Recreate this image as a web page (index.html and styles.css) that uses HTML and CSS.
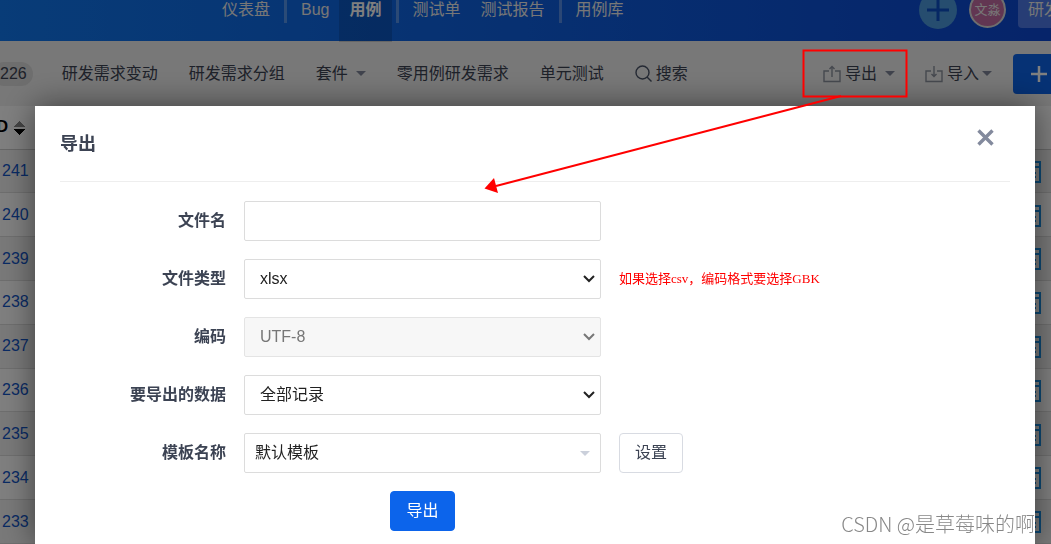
FILE: index.html
```html
<!DOCTYPE html>
<html lang="zh-CN">
<head>
    <meta charset="utf-8">
    <title>用例 - 导出</title>
    <link rel="stylesheet" href="styles.css">
</head>
<body>
    <div class="page">
        <header class="header">
            <nav class="navbar">
                <a href="#">仪表盘</a>
                <span class="divider"></span>
                <a href="#">Bug</a>
                <a href="#" class="active">用例</a>
                <span class="divider"></span>
                <a href="#">测试单</a>
                <a href="#">测试报告</a>
                <span class="divider"></span>
                <a href="#">用例库</a>
            </nav>
            <div class="header-right">
                <button class="add-btn" aria-label="添加">
                    <svg width="22" height="22" viewBox="0 0 22 22"><path d="M11 0v22M0 11h22" stroke="#0c50c8" stroke-width="3"/></svg>
                </button>
                <a href="#" class="avatar">文淼</a>
                <button class="switch-btn">研发</button>
            </div>
        </header>

        <div class="toolbar">
            <span class="label-count">226</span>
            <a href="#">研发需求变动</a>
            <a href="#">研发需求分组</a>
            <a href="#">套件 <span class="caret"></span></a>
            <a href="#">零用例研发需求</a>
            <a href="#">单元测试</a>
            <a href="#" class="search">
                <svg width="17" height="17" viewBox="0 0 17 17" fill="none" stroke="#4b5468" stroke-width="1.4"><circle cx="7.5" cy="7.5" r="6.5"/><path d="M12 12l4.500 4.500"/></svg>
                搜索
            </a>
            <div class="toolbar-right">
                <a href="#" class="export-link">
                    <svg width="18" height="18" viewBox="0 0 18 18" fill="none" stroke="#8c929e" stroke-width="1.400"><path d="M6 6H1v10.500h16V6h-5M9 12V1.500M6.500 4L9 1.500 11.500 4"/></svg>
                    导出 <span class="caret"></span>
                </a>
                <a href="#" class="import-link">
                    <svg width="18" height="18" viewBox="0 0 18 18" fill="none" stroke="#8c929e" stroke-width="1.400"><path d="M6 6H1v10.500h16V6h-5M9 1v10.500M6.500 9L9 11.500 11.500 9"/></svg>
                    导入<span class="caret"></span>
                </a>
                <button class="create-btn" aria-label="建用例">
                    <svg width="16" height="16" viewBox="0 0 16 16"><path d="M8 0v16M0 8h16" stroke="#fff" stroke-width="2.500"/></svg>
                </button>
            </div>
        </div>

        <div class="table-wrap">
            <table class="case-table">
                <thead>
                    <tr><th>ID <span class="sort"></span></th><th></th></tr>
                </thead>
                <tbody>
                    <tr><td><a href="#">241</a></td><td><svg class="icon-case"><use href="#case"/></svg></td></tr>
                    <tr><td><a href="#">240</a></td><td><svg class="icon-case"><use href="#case"/></svg></td></tr>
                    <tr><td><a href="#">239</a></td><td><svg class="icon-case"><use href="#case"/></svg></td></tr>
                    <tr><td><a href="#">238</a></td><td><svg class="icon-case"><use href="#case"/></svg></td></tr>
                    <tr><td><a href="#">237</a></td><td><svg class="icon-case"><use href="#case"/></svg></td></tr>
                    <tr><td><a href="#">236</a></td><td><svg class="icon-case"><use href="#case"/></svg></td></tr>
                    <tr><td><a href="#">235</a></td><td><svg class="icon-case"><use href="#case"/></svg></td></tr>
                    <tr><td><a href="#">234</a></td><td><svg class="icon-case"><use href="#case"/></svg></td></tr>
                    <tr><td><a href="#">233</a></td><td><svg class="icon-case"><use href="#case"/></svg></td></tr>
                </tbody>
            </table>
        </div>
    </div>

    <svg class="symbols">
        <symbol id="case" viewBox="0 0 18 22">
            <path d="M1 1h16v20H1zM1 6h16M5 12h8M5 16h8" fill="none" stroke="#1890e6" stroke-width="2"/>
        </symbol>
    </svg>

    <div class="modal-backdrop">
        <div class="modal" role="dialog" aria-labelledby="modal-title">
            <div class="modal-header">
                <h2 id="modal-title">导出</h2>
                <button class="close" aria-label="关闭">
                    <svg width="17" height="17" viewBox="0 0 17 17"><path d="M1.500 1.500l14 14M15.500 1.500l-14 14" stroke="#838a9d" stroke-width="3.400"/></svg>
                </button>
            </div>
            <form class="export-form">
                <div class="form-row">
                    <label for="fileName">文件名</label>
                    <input type="text" id="fileName" class="form-control">
                </div>
                <div class="form-row">
                    <label for="fileType">文件类型</label>
                    <select id="fileType" class="form-control">
                        <option>xlsx</option>
                        <option>csv</option>
                    </select>
                    <span class="tip">如果选择csv，编码格式要选择GBK</span>
                </div>
                <div class="form-row">
                    <label for="encode">编码</label>
                    <select id="encode" class="form-control" disabled>
                        <option>UTF-8</option>
                        <option>GBK</option>
                    </select>
                </div>
                <div class="form-row">
                    <label for="exportType">要导出的数据</label>
                    <select id="exportType" class="form-control">
                        <option>全部记录</option>
                    </select>
                </div>
                <div class="form-row">
                    <label for="template">模板名称</label>
                    <div class="chosen">
                        <select id="template" class="form-control">
                            <option>默认模板</option>
                        </select>
                        <span class="caret"></span>
                    </div>
                    <button type="button" class="btn">设置</button>
                </div>
                <div class="form-actions">
                    <button type="button" class="btn btn-primary">导出</button>
                </div>
            </form>
        </div>
    </div>

    <svg class="annotation" width="430" height="150" viewBox="480 46 430 150">
        <rect x="803.500" y="50.500" width="103" height="46" fill="none" stroke="#f00" stroke-width="2"/>
        <path d="M841 96L496 186" stroke="#f00" stroke-width="2"/>
        <path d="M484.500 188.500L494 178l4 15z" fill="#f00"/>
    </svg>
    <div class="watermark">CSDN @是草莓味的啊</div>
</body>
</html>
```
FILE: styles.css
```css
* {
  box-sizing: border-box;
}

body {
  margin: 0;
  height: 100vh;
  overflow: hidden;
  font-family: "Liberation Sans", "Noto Sans CJK SC", sans-serif;
  font-size: 16px;
  line-height: 24px;
  color: #3c4353;
}

a {
  color: inherit;
  text-decoration: none;
}

button,
input,
select {
  font: inherit;
}

button {
  border: 0;
  cursor: pointer;
}

/* the page is scrolled a little, so the header starts above the window */
.page {
  display: flex;
  flex-direction: column;
  height: calc(100vh + 22px);
  margin-top: -22px;
  background: #f0f0f0;
}

.header {
  display: flex;
  flex: none;
  height: 63px;
  padding-left: 212px;
  background: linear-gradient(90deg, #1078f0, #0c48d4);
}

.navbar {
  display: flex;
  align-items: center;
  color: #eee;
}

.navbar a {
  padding: 20px 10px;
}

.navbar .active {
  font-weight: bold;
  color: #fff;
  background: rgba(0, 0, 0, .15);
}

.divider {
  width: 3px;
  height: 26px;
  margin: 0 4px;
  background: rgba(255, 255, 255, .3);
}

.header-right {
  display: flex;
  align-items: center;
  gap: 12px;
  margin-left: auto;
  margin-right: -19px;
}

.add-btn {
  display: flex;
  align-items: center;
  justify-content: center;
  width: 38px;
  height: 38px;
  padding: 0;
  border-radius: 50%;
  background: #4c9ade;
}

.avatar {
  width: 37px;
  height: 37px;
  border: 2px solid #ddd;
  border-radius: 50%;
  font-size: 13px;
  line-height: 33px;
  text-align: center;
  color: #eee;
  background: #c46ca4;
}

.switch-btn {
  height: 36px;
  padding: 0 10px;
  border-radius: 4px;
  color: #eee;
  background: #4e7bea;
}

.toolbar {
  display: flex;
  flex: none;
  align-items: center;
  gap: 1px;
  height: 65px;
}

.toolbar a {
  display: flex;
  align-items: center;
  padding: 0 15px;
}

.label-count {
  margin-left: -8px;
  margin-right: 13px;
  padding: 0 6px 0 8px;
  border-radius: 12px;
  background: #dcdcdc;
}

.caret {
  display: inline-block;
  border: 5px solid transparent;
  border-top-color: #80879a;
  border-bottom: 0;
}

.toolbar .caret {
  margin-left: 8px;
}

.toolbar .search {
  gap: 4px;
}

.toolbar-right {
  display: flex;
  align-items: center;
  margin-left: auto;
  margin-right: -18px;
}

.toolbar-right svg {
  margin-right: 4px;
}

.toolbar .import-link {
  padding-right: 21px;
}

.toolbar .import-link .caret {
  margin-left: 3px;
}

.create-btn {
  height: 40px;
  padding: 0 18px;
  border-radius: 4px;
  background: #0c64eb;
}

.create-btn svg {
  display: block;
}

.table-wrap {
  flex: 1;
  margin-left: -8px;
}

.case-table {
  width: 100%;
  height: 100%;
  border-collapse: collapse;
  background: #fff;
}

.case-table th,
.case-table td {
  height: 43px;
  padding: 0 10px;
  border-bottom: 1px solid #ddd;
  text-align: left;
}

.case-table th {
  padding-left: 0;
  color: #000;
  border-bottom-color: #ccc;
}

.case-table tbody tr:nth-child(odd) {
  background: #f2f2f2;
}

.case-table td a {
  color: #1356c8;
}

.case-table td:last-child {
  text-align: right;
}

.sort {
  display: inline-block;
  width: 11px;
  height: 14px;
  margin-left: 2px;
  vertical-align: middle;
  background:
    conic-gradient(from 135deg at 50% 0, #888 90deg, transparent 0) top / 11px 6px no-repeat,
    conic-gradient(from -45deg at 50% 100%, #000 90deg, transparent 0) bottom / 11px 6px no-repeat;
}

.icon-case {
  display: inline-block;
  width: 18px;
  height: 22px;
  vertical-align: middle;
}

.symbols {
  display: none;
}

.modal-backdrop {
  position: fixed;
  inset: 0;
  padding: 106px 16px 0 35px;
  background: rgba(0, 0, 0, .5);
}

.modal {
  height: 100%;
  padding: 0 25px;
  background: #fff;
  box-shadow: 0 0 30px rgba(0, 0, 0, .5);
}

.modal-header {
  display: flex;
  align-items: center;
  justify-content: space-between;
  height: 76px;
  border-bottom: 1px solid #eee;
}

.modal-header h2 {
  margin: 0;
  font-size: 18px;
}

.close {
  margin-bottom: 12px;
  padding: 0 16px;
  background: none;
}

.close svg {
  display: block;
}

.export-form {
  display: flex;
  flex-direction: column;
  gap: 18px;
  padding-top: 19px;
}

.form-row {
  display: grid;
  grid-template-columns: 166px 357px auto;
  column-gap: 18px;
  align-items: center;
  justify-content: start;
}

.form-row label {
  font-weight: bold;
  text-align: right;
}

.form-control {
  width: 100%;
  height: 40px;
  padding: 0 11px 0 15px;
  border: 1px solid #dcdcdc;
  border-radius: 2px;
  color: #222;
  background: #fff;
  appearance: none;
}

select.form-control {
  background: #fff url("data:image/svg+xml,%3Csvg xmlns='http://www.w3.org/2000/svg' width='12' height='8'%3E%3Cpath d='M1 1l5 5 5-5' fill='none' stroke='%23222' stroke-width='2'/%3E%3C/svg%3E") right 5px center no-repeat;
}

select.form-control:disabled {
  color: #777;
  border-color: #e4e4e4;
  background-color: #f7f7f7;
  background-image: url("data:image/svg+xml,%3Csvg xmlns='http://www.w3.org/2000/svg' width='12' height='8'%3E%3Cpath d='M1 1l5 5 5-5' fill='none' stroke='%23777' stroke-width='2'/%3E%3C/svg%3E");
  opacity: 1;
}

.tip {
  font-family: "Liberation Serif", "Noto Sans CJK SC", serif;
  font-size: 13px;
  color: #f00;
}

.chosen {
  position: relative;
}

.chosen .form-control {
  display: block;
  padding-left: 10px;
  background-image: none;
}

.chosen .caret {
  position: absolute;
  top: 18px;
  right: 11px;
  border-top-color: #cbd0db;
}

.btn {
  height: 40px;
  padding: 0 15px;
  border: 1px solid #d8dbe2;
  border-radius: 4px;
  color: #3c4353;
  background: #fff;
}

.form-actions {
  width: 725px;
  text-align: center;
}

.btn-primary {
  border-color: #0c64eb;
  color: #fff;
  background: #0c64eb;
}

.annotation {
  position: absolute;
  top: 46px;
  left: 480px;
}

.watermark {
  position: absolute;
  right: 16px;
  bottom: 6px;
  font-family: "Noto Sans CJK SC", sans-serif;
  font-size: 20px;
  font-weight: 300;
  line-height: 28px;
  color: #888;
  text-shadow: -1px -1px 0 #fff;
}
```
